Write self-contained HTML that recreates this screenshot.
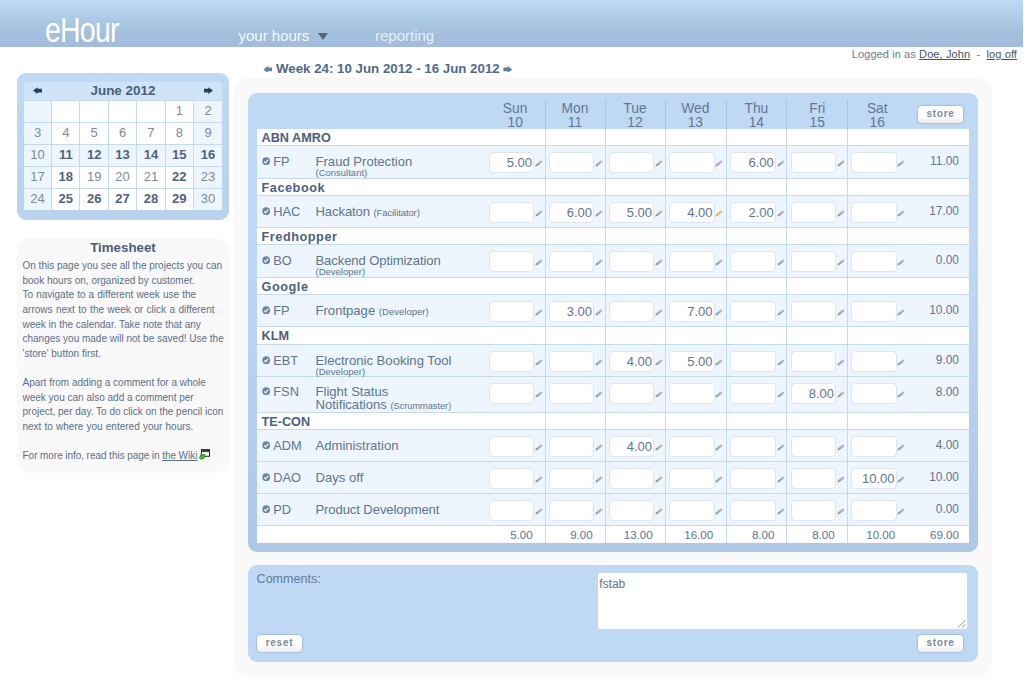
<!DOCTYPE html>
<html><head><meta charset="utf-8"><title>eHour</title>
<style>
html,body{margin:0;padding:0;background:#fff}
body{width:1024px;height:684px;position:relative;overflow:hidden;font-family:"Liberation Sans",sans-serif;color:#5d7590;font-size:13px}
#hdr{position:absolute;left:0;top:0;width:1023px;height:46px;background:linear-gradient(#bed8f5 0,#bcd6f3 8%,#b0cdea 33%,#a9c6e3 52%,#a3bfdc 75%,#a2bddb 100%);border-bottom:1px solid #a0bcee}
#logo{position:absolute;left:45px;top:12.2px;font-size:35.2px;line-height:36px;color:#fff;transform:scaleX(.811);transform-origin:0 0;letter-spacing:-1px}
.nav{position:absolute;top:27px;font-size:15px;line-height:18px;color:#f2f7fd}
#tri{position:absolute;left:318.2px;top:32.8px;width:0;height:0;border-left:5.5px solid transparent;border-right:5.5px solid transparent;border-top:7px solid #55657a}
#login{position:absolute;right:7px;top:47px;font-size:11px;line-height:14px;color:#6a7a8e;white-space:nowrap;letter-spacing:.1px}
#login u{color:#3f546f}
#cal{position:absolute;left:17.4px;top:73.2px;width:211.3px;height:147px;border-radius:9px;background:linear-gradient(#c0daf6,#b9d3ef)}
#calh{position:absolute;left:6.6px;top:9.2px;width:198px;height:17.5px;background:#d0e4f9;border-radius:4px 4px 0 0;text-align:center;font-weight:bold;font-size:13.45px;line-height:18.4px;color:#4a5d78}
#calh .ar{position:absolute;top:4.9px;width:8.9px;height:7.2px}
#calt{position:absolute;left:6.6px;top:26.8px;border-collapse:collapse;table-layout:fixed;width:198px}
#calt td{height:21px;padding:0;border:1px solid #c3d9f4;border-left-width:1px;text-align:center;font-size:13px;background:#fff;color:#7b8b9e;line-height:20px}
#calt tr td:first-child{border-left:0;width:27.1px}#calt tr td:last-child{border-right:0}
#calt tr:last-child td{border-bottom:0}
#calt td.we,#calt tr.cur td{background:#edf5fe}
#calt td.b{font-weight:bold;color:#4d6380}
#help{position:absolute;left:17.4px;top:238.2px;width:211.3px;height:235px;border-radius:14px;background:#f9f9f9;font-size:10px;line-height:14.6px;color:#5c6f88}
#help h3{margin:0;position:absolute;left:0.6px;width:210px;top:2.2px;text-align:center;font-size:13.3px;line-height:16px;color:#4a5d78}
#help p{margin:0;position:absolute;left:5.1px;width:206px;white-space:nowrap}
#wk{position:absolute;left:262.8px;top:60.6px;font-weight:bold;font-size:13.3px;line-height:16px;color:#4f698a;white-space:nowrap}
#wk .ar{width:9.6px;height:6.9px;margin:0 3.6px 0 0;vertical-align:0.2px}
#wk .ar.rt{margin:0 0 0 3.4px}
#main{position:absolute;left:233.4px;top:77.5px;width:758.6px;height:599.5px;border-radius:15px;background:#f9f9f9}
#ts{position:absolute;left:14.6px;top:15.5px;width:730px;height:459px;border-radius:9px;background:linear-gradient(#bfd9f5 0,#bfd9f5 30%,#aec7e7 100%)}
#tb{position:absolute;left:9px;top:7px;width:712px}
#th{position:relative;height:29px}
.dh{position:absolute;top:.5px;width:60.5px;text-align:center;font-size:15px;line-height:14.4px;color:#5f7794;transform:scaleX(.92)}
.vl{position:absolute;top:0;width:1px;height:443px;background:linear-gradient(#a9c3e4 0,#a9c3e4 29px,#c3d8f2 29px)}
.r{position:absolute;left:0;width:712px;box-sizing:border-box;border-bottom:1px solid #c3d9f4;background:#fff}
.r.c{line-height:18px;padding-left:4.5px;font-size:12.7px;color:#4a617f}
.r.p{background:#edf5fe}
.r.tot{border-bottom:0}
.ck{position:absolute;left:5.2px;top:11px;width:8.4px;height:8.4px}
.cd{position:absolute;left:16.3px;top:8.8px;line-height:13px;font-size:12.8px}
.nm{position:absolute;left:58.5px;top:8.8px;line-height:13.2px;font-size:13.1px;white-space:nowrap}
.nm span{display:block}
.up .cd,.up .nm,.up .ck{margin-top:-1.1px}
.nm small{font-size:9.55px}
.nm small.rl{display:block;font-size:9.5px;line-height:10px;margin-top:-0.2px}
.d{position:absolute;top:6px;height:21px;width:60px}
.in{position:absolute;left:4px;top:0;width:45.5px;height:21px;box-sizing:border-box;border:1px solid #dde6f0;border-radius:4px;background:#fff;text-align:right;padding-right:1.2px;font-size:13px;line-height:20.5px;color:#5d7590}
.pc{position:absolute;left:50.2px;top:8.2px;width:7.8px;height:6.8px}
.tt{position:absolute;right:10px;top:9.2px;font-size:11.9px;line-height:13px}
.tot .tt{top:2.4px;font-size:11.6px}
.tot .t{position:absolute;top:2.4px;width:48px;text-align:right;font-size:11.6px;line-height:13px}
.btn{position:absolute;width:45px;height:17px;box-sizing:border-box;border:0;border-radius:4px;background:linear-gradient(#fff 0,#fff 60%,#ebebeb 100%);box-shadow:0 0 2px rgba(80,105,145,.75);text-align:center;font-weight:bold;font-size:10px;line-height:16.5px;letter-spacing:.75px;color:#7b8a9d}
#cm{position:absolute;left:14.6px;top:487.5px;width:730px;height:97px;border-radius:9px;background:#bfd9f5}
#cm .lb{position:absolute;left:8.6px;top:5.5px;font-size:12.55px;line-height:16px;color:#637a97}
#ta{position:absolute;left:349px;top:7px;width:371px;height:58px;box-sizing:border-box;border:1px solid #cbd7e6;border-radius:3px;background:#fff;font-size:12px;line-height:13px;padding:5px 0 0 1.3px;color:#5d7590}
</style></head><body>
<svg width="0" height="0" style="position:absolute"><defs><linearGradient id="gg" x1="0" y1="1" x2="1" y2="0"><stop offset="0" stop-color="#8e8e8e"/><stop offset="1" stop-color="#c6c6c6"/></linearGradient><linearGradient id="gy" x1="0" y1="1" x2="1" y2="0"><stop offset="0" stop-color="#dca834"/><stop offset="1" stop-color="#f2d27a"/></linearGradient></defs></svg>
<div id="hdr"><div id="logo">eHour</div>
<span class="nav" style="left:238.5px">your hours</span><i id="tri"></i><span class="nav" style="left:375px;color:#e6eff9">reporting</span></div>
<div id="login">Logged in as <u>Doe, John</u>&nbsp; - &nbsp;<u>log off</u></div>
<div id="cal"><div id="calh"><svg class="ar" style="left:9.2px" viewBox="0 0 9 7"><path d="M0 3.5 L4.6 0 L4.6 1.6 L9 1.6 L9 5.4 L4.6 5.4 L4.6 7 Z" fill="#274059"/></svg>June 2012<svg class="ar" style="right:9.2px" viewBox="0 0 9 7"><path d="M9 3.5 L4.4 0 L4.4 1.6 L0 1.6 L0 5.4 L4.4 5.4 L4.4 7 Z" fill="#274059"/></svg></div>
<table id="calt"><tr><td class="we"></td><td class=""></td><td class=""></td><td class=""></td><td class=""></td><td class="">1</td><td class="we">2</td></tr><tr><td class="we">3</td><td class="">4</td><td class="">5</td><td class="">6</td><td class="">7</td><td class="">8</td><td class="we">9</td></tr><tr class="cur"><td class="we">10</td><td class="b">11</td><td class="b">12</td><td class="b">13</td><td class="b">14</td><td class="b">15</td><td class="we b">16</td></tr><tr><td class="we">17</td><td class="b">18</td><td class="">19</td><td class="">20</td><td class="">21</td><td class="b">22</td><td class="we">23</td></tr><tr><td class="we">24</td><td class="b">25</td><td class="b">26</td><td class="b">27</td><td class="b">28</td><td class="b">29</td><td class="we">30</td></tr></table></div>
<div id="help"><h3>Timesheet</h3>
<p style="top:21px">On this page you see all the projects you can<br>book hours on, organized by customer.<br><span style="word-spacing:.36px">To navigate to a different week use the</span><br><span style="word-spacing:.68px">arrows next to the week or click a different</span><br>week in the calendar. Take note that any<br>changes you made will not be saved! Use the<br>'store' button first.</p>
<p style="top:138px">Apart from adding a comment for a whole<br>week you can also add a comment per<br>project, per day. To do click on the pencil icon<br><span style="word-spacing:.4px">next to where you entered your hours.</span></p>
<p style="top:211px;word-spacing:-0.3px">For more info, read this page in <u>the Wiki </u></p>
<svg width="11" height="11" viewBox="0 0 11 11" style="position:absolute;left:181.6px;top:210.8px"><rect x="2.4" y="0.5" width="8.1" height="6.8" fill="#fff" stroke="#222" stroke-width="1"/><rect x="2.4" y="0.5" width="8.1" height="2.6" fill="#3c4a3c"/><path d="M0.2 8.6 Q0.6 5.2 3.4 4 L2.6 5.6 Q5 4.6 6.4 5.4 Q6.8 7.4 5.4 7.6 Q6.6 9 5 9.4 Q3 11 0.8 10.2 Z" fill="#2fa51f"/><path d="M1.4 9 L4.6 7" stroke="#7fd670" stroke-width="0.8"/></svg>
</div>
<div id="wk"><svg class="ar" viewBox="0 0 9 7"><path d="M0 3.5 L4.6 0 L4.6 1.6 L9 1.6 L9 5.4 L4.6 5.4 L4.6 7 Z" fill="#6380a0"/></svg>Week 24: 10 Jun 2012 - 16 Jun 2012<svg class="ar rt" viewBox="0 0 9 7"><path d="M9 3.5 L4.4 0 L4.4 1.6 L0 1.6 L0 5.4 L4.4 5.4 L4.4 7 Z" fill="#6380a0"/></svg></div>
<div id="main">
<div id="ts"><div id="tb"><div id="th"><div class="dh" style="left:228.20px;width:60.30px">Sun<br>10</div><div class="dh" style="left:288.50px;width:60.00px">Mon<br>11</div><div class="dh" style="left:348.50px;width:60.00px">Tue<br>12</div><div class="dh" style="left:408.50px;width:60.75px">Wed<br>13</div><div class="dh" style="left:469.25px;width:60.75px">Thu<br>14</div><div class="dh" style="left:530.00px;width:60.50px">Fri<br>15</div><div class="dh" style="left:590.50px;width:60.50px">Sat<br>16</div></div><div class="r c" style="top:29px;height:17px"><b>ABN AMRO</b></div><div class="r p" style="top:46px;height:33px"><svg class="ck" viewBox="0 0 10 10"><circle cx="5" cy="5" r="4.6" fill="#6b86a3"/><path d="M2.6 5.2 L4.3 6.9 L7.5 3.2" stroke="#eef5fd" stroke-width="1.5" fill="none"/></svg><span class="cd">FP</span><div class="nm"><span class="n1">Fraud Protection</span><small class="rl">(Consultant)</small></div><div class="d" style="left:227.75px"><span class="in">5.00</span><svg class="pc" viewBox="0 0 8 7"><path d="M0.2 6.8 L1.1 4.6 L5.4 0.7 Q6.6 0 7.5 0.9 Q8 1.8 7.2 2.6 L2.6 6.2 Z" fill="url(#gg)"/></svg></div><div class="d" style="left:287.75px"><span class="in"></span><svg class="pc" viewBox="0 0 8 7"><path d="M0.2 6.8 L1.1 4.6 L5.4 0.7 Q6.6 0 7.5 0.9 Q8 1.8 7.2 2.6 L2.6 6.2 Z" fill="url(#gg)"/></svg></div><div class="d" style="left:347.75px"><span class="in"></span><svg class="pc" viewBox="0 0 8 7"><path d="M0.2 6.8 L1.1 4.6 L5.4 0.7 Q6.6 0 7.5 0.9 Q8 1.8 7.2 2.6 L2.6 6.2 Z" fill="url(#gg)"/></svg></div><div class="d" style="left:408.25px"><span class="in"></span><svg class="pc" viewBox="0 0 8 7"><path d="M0.2 6.8 L1.1 4.6 L5.4 0.7 Q6.6 0 7.5 0.9 Q8 1.8 7.2 2.6 L2.6 6.2 Z" fill="url(#gg)"/></svg></div><div class="d" style="left:469.50px"><span class="in">6.00</span><svg class="pc" viewBox="0 0 8 7"><path d="M0.2 6.8 L1.1 4.6 L5.4 0.7 Q6.6 0 7.5 0.9 Q8 1.8 7.2 2.6 L2.6 6.2 Z" fill="url(#gg)"/></svg></div><div class="d" style="left:529.75px"><span class="in"></span><svg class="pc" viewBox="0 0 8 7"><path d="M0.2 6.8 L1.1 4.6 L5.4 0.7 Q6.6 0 7.5 0.9 Q8 1.8 7.2 2.6 L2.6 6.2 Z" fill="url(#gg)"/></svg></div><div class="d" style="left:590.25px"><span class="in"></span><svg class="pc" viewBox="0 0 8 7"><path d="M0.2 6.8 L1.1 4.6 L5.4 0.7 Q6.6 0 7.5 0.9 Q8 1.8 7.2 2.6 L2.6 6.2 Z" fill="url(#gg)"/></svg></div><span class="tt">11.00</span></div><div class="r c" style="top:79px;height:17px"><b style="letter-spacing:.55px">Facebook</b></div><div class="r p" style="top:96px;height:32px"><svg class="ck" viewBox="0 0 10 10"><circle cx="5" cy="5" r="4.6" fill="#6b86a3"/><path d="M2.6 5.2 L4.3 6.9 L7.5 3.2" stroke="#eef5fd" stroke-width="1.5" fill="none"/></svg><span class="cd">HAC</span><div class="nm"><span class="n1" style="letter-spacing:-.11px">Hackaton <small>(Facilitator)</small></span></div><div class="d" style="left:227.75px"><span class="in"></span><svg class="pc" viewBox="0 0 8 7"><path d="M0.2 6.8 L1.1 4.6 L5.4 0.7 Q6.6 0 7.5 0.9 Q8 1.8 7.2 2.6 L2.6 6.2 Z" fill="url(#gg)"/></svg></div><div class="d" style="left:287.75px"><span class="in">6.00</span><svg class="pc" viewBox="0 0 8 7"><path d="M0.2 6.8 L1.1 4.6 L5.4 0.7 Q6.6 0 7.5 0.9 Q8 1.8 7.2 2.6 L2.6 6.2 Z" fill="url(#gg)"/></svg></div><div class="d" style="left:347.75px"><span class="in">5.00</span><svg class="pc" viewBox="0 0 8 7"><path d="M0.2 6.8 L1.1 4.6 L5.4 0.7 Q6.6 0 7.5 0.9 Q8 1.8 7.2 2.6 L2.6 6.2 Z" fill="url(#gg)"/></svg></div><div class="d" style="left:408.25px"><span class="in">4.00</span><svg class="pc" viewBox="0 0 8 7"><path d="M0.2 6.8 L1.1 4.6 L5.4 0.7 Q6.6 0 7.5 0.9 Q8 1.8 7.2 2.6 L2.6 6.2 Z" fill="url(#gy)"/></svg></div><div class="d" style="left:469.50px"><span class="in">2.00</span><svg class="pc" viewBox="0 0 8 7"><path d="M0.2 6.8 L1.1 4.6 L5.4 0.7 Q6.6 0 7.5 0.9 Q8 1.8 7.2 2.6 L2.6 6.2 Z" fill="url(#gg)"/></svg></div><div class="d" style="left:529.75px"><span class="in"></span><svg class="pc" viewBox="0 0 8 7"><path d="M0.2 6.8 L1.1 4.6 L5.4 0.7 Q6.6 0 7.5 0.9 Q8 1.8 7.2 2.6 L2.6 6.2 Z" fill="url(#gg)"/></svg></div><div class="d" style="left:590.25px"><span class="in"></span><svg class="pc" viewBox="0 0 8 7"><path d="M0.2 6.8 L1.1 4.6 L5.4 0.7 Q6.6 0 7.5 0.9 Q8 1.8 7.2 2.6 L2.6 6.2 Z" fill="url(#gg)"/></svg></div><span class="tt">17.00</span></div><div class="r c" style="top:128px;height:17px"><b style="letter-spacing:.55px">Fredhopper</b></div><div class="r p" style="top:145px;height:33px"><svg class="ck" viewBox="0 0 10 10"><circle cx="5" cy="5" r="4.6" fill="#6b86a3"/><path d="M2.6 5.2 L4.3 6.9 L7.5 3.2" stroke="#eef5fd" stroke-width="1.5" fill="none"/></svg><span class="cd">BO</span><div class="nm"><span class="n1" style="letter-spacing:-.11px">Backend Optimization</span><small class="rl">(Developer)</small></div><div class="d" style="left:227.75px"><span class="in"></span><svg class="pc" viewBox="0 0 8 7"><path d="M0.2 6.8 L1.1 4.6 L5.4 0.7 Q6.6 0 7.5 0.9 Q8 1.8 7.2 2.6 L2.6 6.2 Z" fill="url(#gg)"/></svg></div><div class="d" style="left:287.75px"><span class="in"></span><svg class="pc" viewBox="0 0 8 7"><path d="M0.2 6.8 L1.1 4.6 L5.4 0.7 Q6.6 0 7.5 0.9 Q8 1.8 7.2 2.6 L2.6 6.2 Z" fill="url(#gg)"/></svg></div><div class="d" style="left:347.75px"><span class="in"></span><svg class="pc" viewBox="0 0 8 7"><path d="M0.2 6.8 L1.1 4.6 L5.4 0.7 Q6.6 0 7.5 0.9 Q8 1.8 7.2 2.6 L2.6 6.2 Z" fill="url(#gg)"/></svg></div><div class="d" style="left:408.25px"><span class="in"></span><svg class="pc" viewBox="0 0 8 7"><path d="M0.2 6.8 L1.1 4.6 L5.4 0.7 Q6.6 0 7.5 0.9 Q8 1.8 7.2 2.6 L2.6 6.2 Z" fill="url(#gg)"/></svg></div><div class="d" style="left:469.50px"><span class="in"></span><svg class="pc" viewBox="0 0 8 7"><path d="M0.2 6.8 L1.1 4.6 L5.4 0.7 Q6.6 0 7.5 0.9 Q8 1.8 7.2 2.6 L2.6 6.2 Z" fill="url(#gg)"/></svg></div><div class="d" style="left:529.75px"><span class="in"></span><svg class="pc" viewBox="0 0 8 7"><path d="M0.2 6.8 L1.1 4.6 L5.4 0.7 Q6.6 0 7.5 0.9 Q8 1.8 7.2 2.6 L2.6 6.2 Z" fill="url(#gg)"/></svg></div><div class="d" style="left:590.25px"><span class="in"></span><svg class="pc" viewBox="0 0 8 7"><path d="M0.2 6.8 L1.1 4.6 L5.4 0.7 Q6.6 0 7.5 0.9 Q8 1.8 7.2 2.6 L2.6 6.2 Z" fill="url(#gg)"/></svg></div><span class="tt">0.00</span></div><div class="r c" style="top:178px;height:17px"><b style="letter-spacing:.55px">Google</b></div><div class="r p" style="top:195px;height:32px"><svg class="ck" viewBox="0 0 10 10"><circle cx="5" cy="5" r="4.6" fill="#6b86a3"/><path d="M2.6 5.2 L4.3 6.9 L7.5 3.2" stroke="#eef5fd" stroke-width="1.5" fill="none"/></svg><span class="cd">FP</span><div class="nm"><span class="n1">Frontpage <small>(Developer)</small></span></div><div class="d" style="left:227.75px"><span class="in"></span><svg class="pc" viewBox="0 0 8 7"><path d="M0.2 6.8 L1.1 4.6 L5.4 0.7 Q6.6 0 7.5 0.9 Q8 1.8 7.2 2.6 L2.6 6.2 Z" fill="url(#gg)"/></svg></div><div class="d" style="left:287.75px"><span class="in">3.00</span><svg class="pc" viewBox="0 0 8 7"><path d="M0.2 6.8 L1.1 4.6 L5.4 0.7 Q6.6 0 7.5 0.9 Q8 1.8 7.2 2.6 L2.6 6.2 Z" fill="url(#gg)"/></svg></div><div class="d" style="left:347.75px"><span class="in"></span><svg class="pc" viewBox="0 0 8 7"><path d="M0.2 6.8 L1.1 4.6 L5.4 0.7 Q6.6 0 7.5 0.9 Q8 1.8 7.2 2.6 L2.6 6.2 Z" fill="url(#gg)"/></svg></div><div class="d" style="left:408.25px"><span class="in">7.00</span><svg class="pc" viewBox="0 0 8 7"><path d="M0.2 6.8 L1.1 4.6 L5.4 0.7 Q6.6 0 7.5 0.9 Q8 1.8 7.2 2.6 L2.6 6.2 Z" fill="url(#gg)"/></svg></div><div class="d" style="left:469.50px"><span class="in"></span><svg class="pc" viewBox="0 0 8 7"><path d="M0.2 6.8 L1.1 4.6 L5.4 0.7 Q6.6 0 7.5 0.9 Q8 1.8 7.2 2.6 L2.6 6.2 Z" fill="url(#gg)"/></svg></div><div class="d" style="left:529.75px"><span class="in"></span><svg class="pc" viewBox="0 0 8 7"><path d="M0.2 6.8 L1.1 4.6 L5.4 0.7 Q6.6 0 7.5 0.9 Q8 1.8 7.2 2.6 L2.6 6.2 Z" fill="url(#gg)"/></svg></div><div class="d" style="left:590.25px"><span class="in"></span><svg class="pc" viewBox="0 0 8 7"><path d="M0.2 6.8 L1.1 4.6 L5.4 0.7 Q6.6 0 7.5 0.9 Q8 1.8 7.2 2.6 L2.6 6.2 Z" fill="url(#gg)"/></svg></div><span class="tt">10.00</span></div><div class="r c" style="top:227px;height:18px"><b>KLM</b></div><div class="r p" style="top:245px;height:32px"><svg class="ck" viewBox="0 0 10 10"><circle cx="5" cy="5" r="4.6" fill="#6b86a3"/><path d="M2.6 5.2 L4.3 6.9 L7.5 3.2" stroke="#eef5fd" stroke-width="1.5" fill="none"/></svg><span class="cd">EBT</span><div class="nm"><span class="n1">Electronic Booking Tool</span><small class="rl">(Developer)</small></div><div class="d" style="left:227.75px"><span class="in"></span><svg class="pc" viewBox="0 0 8 7"><path d="M0.2 6.8 L1.1 4.6 L5.4 0.7 Q6.6 0 7.5 0.9 Q8 1.8 7.2 2.6 L2.6 6.2 Z" fill="url(#gg)"/></svg></div><div class="d" style="left:287.75px"><span class="in"></span><svg class="pc" viewBox="0 0 8 7"><path d="M0.2 6.8 L1.1 4.6 L5.4 0.7 Q6.6 0 7.5 0.9 Q8 1.8 7.2 2.6 L2.6 6.2 Z" fill="url(#gg)"/></svg></div><div class="d" style="left:347.75px"><span class="in">4.00</span><svg class="pc" viewBox="0 0 8 7"><path d="M0.2 6.8 L1.1 4.6 L5.4 0.7 Q6.6 0 7.5 0.9 Q8 1.8 7.2 2.6 L2.6 6.2 Z" fill="url(#gg)"/></svg></div><div class="d" style="left:408.25px"><span class="in">5.00</span><svg class="pc" viewBox="0 0 8 7"><path d="M0.2 6.8 L1.1 4.6 L5.4 0.7 Q6.6 0 7.5 0.9 Q8 1.8 7.2 2.6 L2.6 6.2 Z" fill="url(#gg)"/></svg></div><div class="d" style="left:469.50px"><span class="in"></span><svg class="pc" viewBox="0 0 8 7"><path d="M0.2 6.8 L1.1 4.6 L5.4 0.7 Q6.6 0 7.5 0.9 Q8 1.8 7.2 2.6 L2.6 6.2 Z" fill="url(#gg)"/></svg></div><div class="d" style="left:529.75px"><span class="in"></span><svg class="pc" viewBox="0 0 8 7"><path d="M0.2 6.8 L1.1 4.6 L5.4 0.7 Q6.6 0 7.5 0.9 Q8 1.8 7.2 2.6 L2.6 6.2 Z" fill="url(#gg)"/></svg></div><div class="d" style="left:590.25px"><span class="in"></span><svg class="pc" viewBox="0 0 8 7"><path d="M0.2 6.8 L1.1 4.6 L5.4 0.7 Q6.6 0 7.5 0.9 Q8 1.8 7.2 2.6 L2.6 6.2 Z" fill="url(#gg)"/></svg></div><span class="tt">9.00</span></div><div class="r p up" style="top:277px;height:36px"><svg class="ck" viewBox="0 0 10 10"><circle cx="5" cy="5" r="4.6" fill="#6b86a3"/><path d="M2.6 5.2 L4.3 6.9 L7.5 3.2" stroke="#eef5fd" stroke-width="1.5" fill="none"/></svg><span class="cd">FSN</span><div class="nm"><span class="n1">Flight Status</span><span class="n2">Notifications <small style="font-size:9.2px">(Scrummaster)</small></span></div><div class="d" style="left:227.75px"><span class="in"></span><svg class="pc" viewBox="0 0 8 7"><path d="M0.2 6.8 L1.1 4.6 L5.4 0.7 Q6.6 0 7.5 0.9 Q8 1.8 7.2 2.6 L2.6 6.2 Z" fill="url(#gg)"/></svg></div><div class="d" style="left:287.75px"><span class="in"></span><svg class="pc" viewBox="0 0 8 7"><path d="M0.2 6.8 L1.1 4.6 L5.4 0.7 Q6.6 0 7.5 0.9 Q8 1.8 7.2 2.6 L2.6 6.2 Z" fill="url(#gg)"/></svg></div><div class="d" style="left:347.75px"><span class="in"></span><svg class="pc" viewBox="0 0 8 7"><path d="M0.2 6.8 L1.1 4.6 L5.4 0.7 Q6.6 0 7.5 0.9 Q8 1.8 7.2 2.6 L2.6 6.2 Z" fill="url(#gg)"/></svg></div><div class="d" style="left:408.25px"><span class="in"></span><svg class="pc" viewBox="0 0 8 7"><path d="M0.2 6.8 L1.1 4.6 L5.4 0.7 Q6.6 0 7.5 0.9 Q8 1.8 7.2 2.6 L2.6 6.2 Z" fill="url(#gg)"/></svg></div><div class="d" style="left:469.50px"><span class="in"></span><svg class="pc" viewBox="0 0 8 7"><path d="M0.2 6.8 L1.1 4.6 L5.4 0.7 Q6.6 0 7.5 0.9 Q8 1.8 7.2 2.6 L2.6 6.2 Z" fill="url(#gg)"/></svg></div><div class="d" style="left:529.75px"><span class="in">8.00</span><svg class="pc" viewBox="0 0 8 7"><path d="M0.2 6.8 L1.1 4.6 L5.4 0.7 Q6.6 0 7.5 0.9 Q8 1.8 7.2 2.6 L2.6 6.2 Z" fill="url(#gg)"/></svg></div><div class="d" style="left:590.25px"><span class="in"></span><svg class="pc" viewBox="0 0 8 7"><path d="M0.2 6.8 L1.1 4.6 L5.4 0.7 Q6.6 0 7.5 0.9 Q8 1.8 7.2 2.6 L2.6 6.2 Z" fill="url(#gg)"/></svg></div><span class="tt">8.00</span></div><div class="r c" style="top:313px;height:17px"><b>TE-CON</b></div><div class="r p" style="top:330px;height:32px"><svg class="ck" viewBox="0 0 10 10"><circle cx="5" cy="5" r="4.6" fill="#6b86a3"/><path d="M2.6 5.2 L4.3 6.9 L7.5 3.2" stroke="#eef5fd" stroke-width="1.5" fill="none"/></svg><span class="cd">ADM</span><div class="nm"><span class="n1">Administration <small></small></span></div><div class="d" style="left:227.75px"><span class="in"></span><svg class="pc" viewBox="0 0 8 7"><path d="M0.2 6.8 L1.1 4.6 L5.4 0.7 Q6.6 0 7.5 0.9 Q8 1.8 7.2 2.6 L2.6 6.2 Z" fill="url(#gg)"/></svg></div><div class="d" style="left:287.75px"><span class="in"></span><svg class="pc" viewBox="0 0 8 7"><path d="M0.2 6.8 L1.1 4.6 L5.4 0.7 Q6.6 0 7.5 0.9 Q8 1.8 7.2 2.6 L2.6 6.2 Z" fill="url(#gg)"/></svg></div><div class="d" style="left:347.75px"><span class="in">4.00</span><svg class="pc" viewBox="0 0 8 7"><path d="M0.2 6.8 L1.1 4.6 L5.4 0.7 Q6.6 0 7.5 0.9 Q8 1.8 7.2 2.6 L2.6 6.2 Z" fill="url(#gg)"/></svg></div><div class="d" style="left:408.25px"><span class="in"></span><svg class="pc" viewBox="0 0 8 7"><path d="M0.2 6.8 L1.1 4.6 L5.4 0.7 Q6.6 0 7.5 0.9 Q8 1.8 7.2 2.6 L2.6 6.2 Z" fill="url(#gg)"/></svg></div><div class="d" style="left:469.50px"><span class="in"></span><svg class="pc" viewBox="0 0 8 7"><path d="M0.2 6.8 L1.1 4.6 L5.4 0.7 Q6.6 0 7.5 0.9 Q8 1.8 7.2 2.6 L2.6 6.2 Z" fill="url(#gg)"/></svg></div><div class="d" style="left:529.75px"><span class="in"></span><svg class="pc" viewBox="0 0 8 7"><path d="M0.2 6.8 L1.1 4.6 L5.4 0.7 Q6.6 0 7.5 0.9 Q8 1.8 7.2 2.6 L2.6 6.2 Z" fill="url(#gg)"/></svg></div><div class="d" style="left:590.25px"><span class="in"></span><svg class="pc" viewBox="0 0 8 7"><path d="M0.2 6.8 L1.1 4.6 L5.4 0.7 Q6.6 0 7.5 0.9 Q8 1.8 7.2 2.6 L2.6 6.2 Z" fill="url(#gg)"/></svg></div><span class="tt">4.00</span></div><div class="r p" style="top:362px;height:32px"><svg class="ck" viewBox="0 0 10 10"><circle cx="5" cy="5" r="4.6" fill="#6b86a3"/><path d="M2.6 5.2 L4.3 6.9 L7.5 3.2" stroke="#eef5fd" stroke-width="1.5" fill="none"/></svg><span class="cd">DAO</span><div class="nm"><span class="n1">Days off <small></small></span></div><div class="d" style="left:227.75px"><span class="in"></span><svg class="pc" viewBox="0 0 8 7"><path d="M0.2 6.8 L1.1 4.6 L5.4 0.7 Q6.6 0 7.5 0.9 Q8 1.8 7.2 2.6 L2.6 6.2 Z" fill="url(#gg)"/></svg></div><div class="d" style="left:287.75px"><span class="in"></span><svg class="pc" viewBox="0 0 8 7"><path d="M0.2 6.8 L1.1 4.6 L5.4 0.7 Q6.6 0 7.5 0.9 Q8 1.8 7.2 2.6 L2.6 6.2 Z" fill="url(#gg)"/></svg></div><div class="d" style="left:347.75px"><span class="in"></span><svg class="pc" viewBox="0 0 8 7"><path d="M0.2 6.8 L1.1 4.6 L5.4 0.7 Q6.6 0 7.5 0.9 Q8 1.8 7.2 2.6 L2.6 6.2 Z" fill="url(#gg)"/></svg></div><div class="d" style="left:408.25px"><span class="in"></span><svg class="pc" viewBox="0 0 8 7"><path d="M0.2 6.8 L1.1 4.6 L5.4 0.7 Q6.6 0 7.5 0.9 Q8 1.8 7.2 2.6 L2.6 6.2 Z" fill="url(#gg)"/></svg></div><div class="d" style="left:469.50px"><span class="in"></span><svg class="pc" viewBox="0 0 8 7"><path d="M0.2 6.8 L1.1 4.6 L5.4 0.7 Q6.6 0 7.5 0.9 Q8 1.8 7.2 2.6 L2.6 6.2 Z" fill="url(#gg)"/></svg></div><div class="d" style="left:529.75px"><span class="in"></span><svg class="pc" viewBox="0 0 8 7"><path d="M0.2 6.8 L1.1 4.6 L5.4 0.7 Q6.6 0 7.5 0.9 Q8 1.8 7.2 2.6 L2.6 6.2 Z" fill="url(#gg)"/></svg></div><div class="d" style="left:590.25px"><span class="in">10.00</span><svg class="pc" viewBox="0 0 8 7"><path d="M0.2 6.8 L1.1 4.6 L5.4 0.7 Q6.6 0 7.5 0.9 Q8 1.8 7.2 2.6 L2.6 6.2 Z" fill="url(#gg)"/></svg></div><span class="tt">10.00</span></div><div class="r p" style="top:394px;height:32px"><svg class="ck" viewBox="0 0 10 10"><circle cx="5" cy="5" r="4.6" fill="#6b86a3"/><path d="M2.6 5.2 L4.3 6.9 L7.5 3.2" stroke="#eef5fd" stroke-width="1.5" fill="none"/></svg><span class="cd">PD</span><div class="nm"><span class="n1" style="letter-spacing:-.11px">Product Development <small></small></span></div><div class="d" style="left:227.75px"><span class="in"></span><svg class="pc" viewBox="0 0 8 7"><path d="M0.2 6.8 L1.1 4.6 L5.4 0.7 Q6.6 0 7.5 0.9 Q8 1.8 7.2 2.6 L2.6 6.2 Z" fill="url(#gg)"/></svg></div><div class="d" style="left:287.75px"><span class="in"></span><svg class="pc" viewBox="0 0 8 7"><path d="M0.2 6.8 L1.1 4.6 L5.4 0.7 Q6.6 0 7.5 0.9 Q8 1.8 7.2 2.6 L2.6 6.2 Z" fill="url(#gg)"/></svg></div><div class="d" style="left:347.75px"><span class="in"></span><svg class="pc" viewBox="0 0 8 7"><path d="M0.2 6.8 L1.1 4.6 L5.4 0.7 Q6.6 0 7.5 0.9 Q8 1.8 7.2 2.6 L2.6 6.2 Z" fill="url(#gg)"/></svg></div><div class="d" style="left:408.25px"><span class="in"></span><svg class="pc" viewBox="0 0 8 7"><path d="M0.2 6.8 L1.1 4.6 L5.4 0.7 Q6.6 0 7.5 0.9 Q8 1.8 7.2 2.6 L2.6 6.2 Z" fill="url(#gg)"/></svg></div><div class="d" style="left:469.50px"><span class="in"></span><svg class="pc" viewBox="0 0 8 7"><path d="M0.2 6.8 L1.1 4.6 L5.4 0.7 Q6.6 0 7.5 0.9 Q8 1.8 7.2 2.6 L2.6 6.2 Z" fill="url(#gg)"/></svg></div><div class="d" style="left:529.75px"><span class="in"></span><svg class="pc" viewBox="0 0 8 7"><path d="M0.2 6.8 L1.1 4.6 L5.4 0.7 Q6.6 0 7.5 0.9 Q8 1.8 7.2 2.6 L2.6 6.2 Z" fill="url(#gg)"/></svg></div><div class="d" style="left:590.25px"><span class="in"></span><svg class="pc" viewBox="0 0 8 7"><path d="M0.2 6.8 L1.1 4.6 L5.4 0.7 Q6.6 0 7.5 0.9 Q8 1.8 7.2 2.6 L2.6 6.2 Z" fill="url(#gg)"/></svg></div><span class="tt">0.00</span></div><div class="r tot" style="top:426px;height:17px"><span class="t" style="left:227.75px">5.00</span><span class="t" style="left:287.75px">9.00</span><span class="t" style="left:347.75px">13.00</span><span class="t" style="left:408.25px">16.00</span><span class="t" style="left:469.50px">8.00</span><span class="t" style="left:529.75px">8.00</span><span class="t" style="left:590.25px">10.00</span><span class="tt">69.00</span></div><i class="vl" style="left:288.00px"></i><i class="vl" style="left:348.00px"></i><i class="vl" style="left:408.00px"></i><i class="vl" style="left:468.75px"></i><i class="vl" style="left:529.50px"></i><i class="vl" style="left:590.00px"></i></div>
<div class="btn" style="left:670px;top:12.6px">store</div></div>
<div id="cm"><span class="lb">Comments:</span><div id="ta">fstab<svg width="9" height="9" viewBox="0 0 9 9" style="position:absolute;right:1px;bottom:1px"><path d="M8.5 1 L1 8.5 M8.5 5 L5 8.5" stroke="#8a8f98" stroke-width="1" fill="none"/></svg></div>
<div class="btn" style="left:9px;top:69.6px">reset</div><div class="btn" style="left:670px;top:69.6px">store</div></div>
</div>
</body></html>
